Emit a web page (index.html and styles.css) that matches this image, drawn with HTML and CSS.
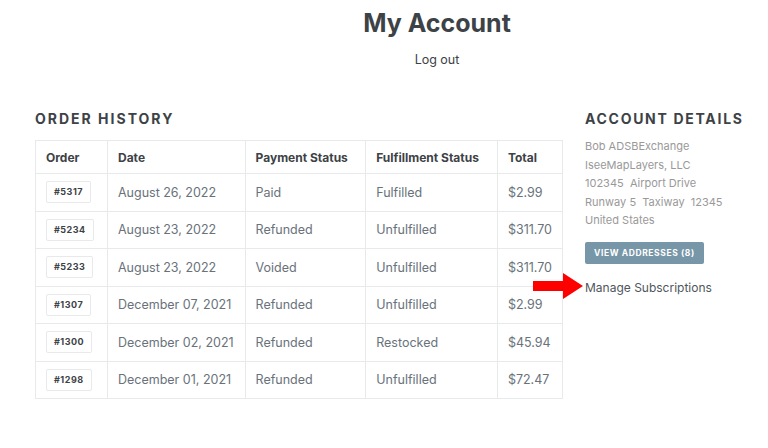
FILE: index.html
```html
<!DOCTYPE html>
<html>
<head>
<meta charset="utf-8">
<link rel="stylesheet" href="styles.css">
</head>
<body>
<header class="page-head">
  <h1 class="title">My Account</h1>
  <a class="logout" href="#">Log out</a>
</header>
<div class="grid">
  <section class="orders">
    <h2 class="heading">Order History</h2>
    <table class="table">
      <thead>
        <tr><th class="c1">Order</th><th class="c2">Date</th><th class="c3">Payment Status</th><th class="c4">Fulfillment Status</th><th class="c5">Total</th></tr>
      </thead>
      <tbody>
        <tr><td><span class="badge">#5317</span></td><td>August 26, 2022</td><td>Paid</td><td>Fulfilled</td><td>$2.99</td></tr>
        <tr><td><span class="badge">#5234</span></td><td>August 23, 2022</td><td>Refunded</td><td>Unfulfilled</td><td>$311.70</td></tr>
        <tr><td><span class="badge">#5233</span></td><td>August 23, 2022</td><td>Voided</td><td>Unfulfilled</td><td>$311.70</td></tr>
        <tr><td><span class="badge">#1307</span></td><td>December 07, 2021</td><td>Refunded</td><td>Unfulfilled</td><td>$2.99</td></tr>
        <tr><td><span class="badge">#1300</span></td><td>December 02, 2021</td><td>Refunded</td><td>Restocked</td><td>$45.94</td></tr>
        <tr><td><span class="badge">#1298</span></td><td>December 01, 2021</td><td>Refunded</td><td>Unfulfilled</td><td>$72.47</td></tr>
      </tbody>
    </table>
  </section>
  <aside class="details">
    <h2 class="heading">Account Details</h2>
    <p class="address">Bob ADSBExchange<br>IseeMapLayers, LLC<br>102345&nbsp; Airport Drive<br>Runway 5&nbsp; Taxiway&nbsp; 12345<br>United States</p>
    <a class="btn" href="#">View Addresses (8)</a>
    <div class="manage">
      <svg class="arrow" width="50" height="26" viewBox="0 0 50 26"><polygon points="0,8 30,8 30,0 50,13 30,26 30,18 0,18" fill="#f00"/></svg>
      <a class="manage-link" href="#">Manage Subscriptions</a>
    </div>
  </aside>
</div>
</body>
</html>
```
FILE: styles.css
```css
* { box-sizing: border-box; }
body {
  margin: 0;
  font-family: "Inter", "Liberation Sans", sans-serif;
  color: #69727b;
  background: #fff;
}
a { text-decoration: none; }
.page-head {
  display: flex;
  flex-direction: column;
  align-items: center;
  padding-top: 6px;
  padding-left: 106px;
}
.title {
  margin: 0;
  font-size: 25px;
  font-weight: 700;
  color: #3d4246;
  line-height: 34px;
}
.logout {
  margin-top: 11px;
  font-size: 12.5px;
  color: #3d4246;
  line-height: 18px;
}
.grid {
  display: flex;
  gap: 22px;
  padding: 40px 0 0 35px;
}
.orders { width: 528px; flex: none; }
.details { flex: 1; min-width: 0; }
.heading {
  margin: 0 0 11px;
  font-size: 14px;
  font-weight: 700;
  letter-spacing: 2px;
  text-transform: uppercase;
  color: #3d4246;
  line-height: 20px;
  white-space: nowrap;
}
.details .heading { margin-bottom: 8px; letter-spacing: 1.7px; }
.table {
  width: 528px;
  border-collapse: collapse;
  font-size: 12.5px;
}
.table th, .table td {
  border: 1px solid #e8e9eb;
  text-align: left;
  padding: 0 10px;
}
.table th {
  height: 33px;
  font-weight: 700;
  font-size: 12px;
  color: #3d4246;
}
.table td { height: 37.5px; }
.c1 { width: 72px; }
.c2 { width: 138px; }
.c3 { width: 121px; }
.c4 { width: 132px; }
.badge {
  display: inline-block;
  border: 1px solid #e8e9eb;
  border-radius: 2px;
  padding: 0 7px;
  line-height: 20px;
  font-size: 9px;
  font-weight: 700;
  color: #3d4246;
  letter-spacing: 0.5px;
}
.address {
  margin: 0;
  font-size: 11px;
  line-height: 18.5px;
  color: #999;
}
.btn {
  display: inline-block;
  margin-top: 12px;
  background: #7796a8;
  color: #fff;
  font-size: 8.5px;
  font-weight: 700;
  letter-spacing: 0.6px;
  text-transform: uppercase;
  padding: 0 9px;
  line-height: 22px;
  border-radius: 2px;
}
.manage {
  position: relative;
  margin-top: 12px;
}
.arrow {
  position: absolute;
  left: -52px;
  top: -3px;
}
.manage-link {
  font-size: 12px;
  color: #4f565c;
  line-height: 18px;
}
```
